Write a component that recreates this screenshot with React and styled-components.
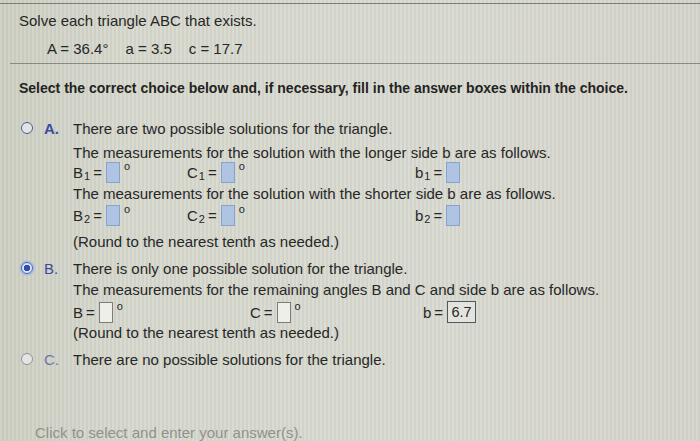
import React from "react";
import styled, { createGlobalStyle } from "styled-components";

const GlobalStyle = createGlobalStyle`
  html, body {
    margin: 0;
    padding: 0;
  }
  body {
    background:
      repeating-linear-gradient(90deg, rgba(255, 255, 255, 0.06) 0 2px, rgba(0, 0, 0, 0.03) 2px 4px),
      linear-gradient(90deg, #cdd0c3 0%, #d7d9ce 18%, #d9dad0 65%, #d6d5cc 100%);
    font-family: "Liberation Sans", Arial, sans-serif;
    color: #272727;
    overflow: hidden;
  }
`;

const Page = styled.div`
  width: 700px;
  height: 438px;
  margin-top: 3px;
  border-top: 1px solid #7d7d78;
  box-sizing: border-box;
  overflow: hidden;
  font-size: 15px;
  line-height: 21px;
`;

const Header = styled.div`
  padding: 6px 0 0 19px;
`;

const Title = styled.div`
  font-size: 15px;
`;

const Given = styled.div`
  display: flex;
  gap: 17px;
  margin-top: 7px;
  padding-left: 28px;
`;

const Divider = styled.hr`
  margin: 4px 0 0 10px;
  border: none;
  border-top: 1px solid #8a8a84;
`;

const Instruction = styled.div`
  margin-top: 14px;
  padding-left: 19px;
  font-weight: 700;
  font-size: 14px;
  color: #232323;
  white-space: nowrap;
`;

const Choices = styled.div`
  margin-top: 19px;
  display: flex;
  flex-direction: column;
  gap: 6px;
`;

const Choice = styled.div`
  display: grid;
  grid-template-columns: 12px 18px 1fr;
  column-gap: 11px;
  padding-left: 21px;
`;

const Radio = styled.span`
  width: 12px;
  height: 12px;
  margin-top: 4px;
  border-radius: 50%;
  box-sizing: border-box;
  border: 1.5px solid ${(p) => (p.$checked ? "#4f68b8" : p.$dim ? "#8d93a8" : "#4a5aa8")};
  background: ${(p) =>
    p.$checked
      ? "radial-gradient(circle, #2b4fb8 0 3px, #dde3f2 3.5px)"
      : "#e4e5e0"};
  box-shadow: ${(p) => (p.$checked ? "0 0 0 1.5px #a9b8e0" : "none")};
`;

const Letter = styled.span`
  color: ${(p) => (p.$dim ? "#6c76a8" : "#3d4a9e")};
  font-weight: ${(p) => (p.$bold ? 700 : 400)};
`;

const Body = styled.div`
  display: flex;
  flex-direction: column;
`;

const Line = styled.div`
  height: ${(p) => p.$h || 21}px;
  line-height: ${(p) => p.$h || 21}px;
  margin-top: ${(p) => p.$mt || 0}px;
`;

const FieldRow = styled.div`
  display: grid;
  grid-template-columns: ${(p) => p.$cols};
  height: ${(p) => p.$h || 21}px;
  margin-top: ${(p) => p.$mt || 0}px;
  align-items: center;
`;

const Field = styled.span`
  display: inline-flex;
  align-items: center;
  white-space: nowrap;
`;

const Eq = styled.span`
  margin: 0 4px 0 3px;
`;

const Sub = styled.span`
  font-size: 11px;
  line-height: 11px;
  position: relative;
  top: 4px;
  margin-left: 1px;
`;

const Box = styled.span`
  display: inline-block;
  width: 14px;
  height: 21px;
  box-sizing: border-box;
  border: 1px solid ${(p) => (p.$blank ? "#7c7c7c" : "#86a3cf")};
  background: ${(p) => (p.$blank ? "#efefea" : "#aec4e2")};
`;

const Answer = styled.span`
  display: inline-flex;
  align-items: center;
  justify-content: center;
  width: 29px;
  height: 22px;
  box-sizing: border-box;
  border: 1px solid #4d5a5a;
  background: #e2e4dd;
  font-size: 14.5px;
`;

const Deg = styled.span`
  align-self: flex-start;
  margin-left: 4px;
  font-size: 11px;
  line-height: 9px;
`;

const Footer = styled.div`
  margin-top: 52px;
  padding-left: 35px;
  color: #90928c;
  font-size: 15px;
`;

function Item({ name, sub, blank, degree, answer }) {
  return (
    <Field>
      {name}
      {sub && <Sub>{sub}</Sub>}
      <Eq>=</Eq>
      {answer ? <Answer>{answer}</Answer> : <Box $blank={blank} />}
      {degree && <Deg>o</Deg>}
    </Field>
  );
}

export default function App() {
  return (
    <>
      <GlobalStyle />
      <Page>
        <Header>
          <Title>Solve each triangle ABC that exists.</Title>
          <Given>
            <span>A = 36.4°</span>
            <span>a = 3.5</span>
            <span>c = 17.7</span>
          </Given>
        </Header>
        <Divider />
        <Instruction>
          Select the correct choice below and, if necessary, fill in the answer boxes within the choice.
        </Instruction>
        <Choices>
          <Choice>
            <Radio />
            <Letter $bold>A.</Letter>
            <Body>
              <Line>There are two possible solutions for the triangle.</Line>
              <Line $mt={4} $h={19}>The measurements for the solution with the longer side b are as follows.</Line>
              <FieldRow $cols="114px 228px auto">
                <Item name="B" sub="1" degree />
                <Item name="C" sub="1" degree />
                <Item name="b" sub="1" />
              </FieldRow>
              <Line $h={22}>The measurements for the solution with the shorter side b are as follows.</Line>
              <FieldRow $cols="114px 228px auto">
                <Item name="B" sub="2" degree />
                <Item name="C" sub="2" degree />
                <Item name="b" sub="2" />
              </FieldRow>
              <Line $mt={5}>(Round to the nearest tenth as needed.)</Line>
            </Body>
          </Choice>
          <Choice>
            <Radio $checked />
            <Letter>B.</Letter>
            <Body>
              <Line>There is only one possible solution for the triangle.</Line>
              <Line>The measurements for the remaining angles B and C and side b are as follows.</Line>
              <FieldRow $cols="177px 173px auto" $h={22} $mt={1}>
                <Item name="B" blank degree />
                <Item name="C" blank degree />
                <Item name="b" answer="6.7" />
              </FieldRow>
              <Line $h={20}>(Round to the nearest tenth as needed.)</Line>
            </Body>
          </Choice>
          <Choice>
            <Radio $dim />
            <Letter $dim>C.</Letter>
            <Body>
              <Line>There are no possible solutions for the triangle.</Line>
            </Body>
          </Choice>
        </Choices>
        <Footer>Click to select and enter your answer(s).</Footer>
      </Page>
    </>
  );
}
